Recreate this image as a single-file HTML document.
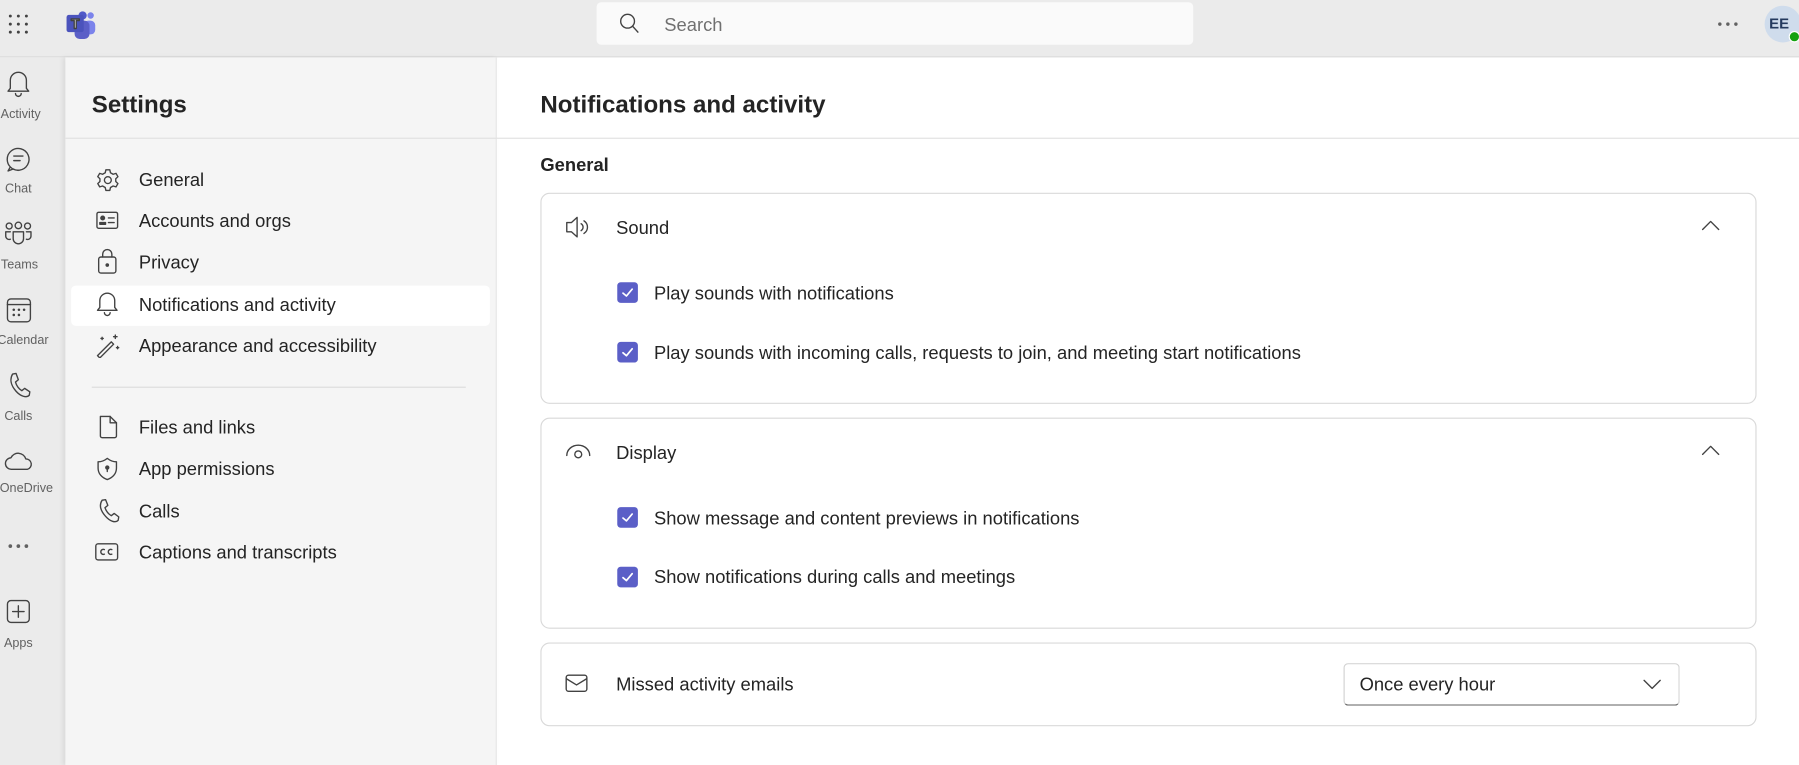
<!DOCTYPE html>
<html><head><meta charset="utf-8">
<style>
*{box-sizing:border-box;margin:0;padding:0}
html,body{width:1799px;height:765px;overflow:hidden;background:#fff}
#w{position:absolute;left:0;top:0;width:1568px;height:667px;transform:scale(1.14732);transform-origin:0 0;font-family:"Segoe UI","Liberation Sans",sans-serif;color:#242424}
.a{position:absolute}
svg{position:absolute;fill:none;stroke:#424242;stroke-width:1.2;stroke-linecap:round;stroke-linejoin:round}
.t{position:absolute;font-size:16px;white-space:nowrap;line-height:20px;margin-top:2px}
.rl{position:absolute;font-size:11px;color:#616161;width:56px;text-align:center;line-height:14px;margin-top:1px}
.cb{position:absolute;width:18px;height:18px;background:#5b5fc7;border-radius:3px}
.cb svg{stroke:#fff;stroke-width:1.5;left:0;top:0}
.card{position:absolute;left:471px;width:1060px;border:1px solid #d9d9d9;border-radius:8px;background:#fff}
</style></head><body><div id="w">
<div class="a" style="left:0;top:0;width:1568px;height:50px;background:#ebebeb;border-bottom:1px solid #dcdcdc"></div>
<svg style="left:6px;top:11px" width="20" height="20"><g fill="#424242" stroke="none"><circle cx="3" cy="3" r="1.3"/><circle cx="10" cy="3" r="1.3"/><circle cx="17" cy="3" r="1.3"/><circle cx="3" cy="10" r="1.3"/><circle cx="10" cy="10" r="1.3"/><circle cx="17" cy="10" r="1.3"/><circle cx="3" cy="17" r="1.3"/><circle cx="10" cy="17" r="1.3"/><circle cx="17" cy="17" r="1.3"/></g></svg>
<svg style="left:57px;top:9px" width="28" height="26"><g stroke="none"><circle cx="22" cy="4.5" r="2.8" fill="#7b83eb"/><rect x="16" y="9" width="10" height="12" rx="4" fill="#7b83eb"/><circle cx="15" cy="4.5" r="3.6" fill="#5059c9"/><rect x="8" y="9" width="13" height="16" rx="4.5" fill="#5b5fc7"/><rect x="1" y="4" width="15" height="15" rx="2" fill="#4b53bc"/></g><text x="8.5" y="16" font-size="12" font-weight="bold" fill="#fff" text-anchor="middle" font-family="Liberation Sans">T</text></svg>
<div class="a" style="left:520px;top:2px;width:520px;height:37px;background:#fafafa;border-radius:4px"></div>
<svg style="left:539px;top:11px" width="20" height="20"><circle cx="8" cy="7.5" r="6"/><path d="M12.5 12 L17 17"/></svg>
<div class="t" style="left:579px;top:11px;color:#707070">Search</div>
<svg style="left:1496px;top:18px" width="20" height="6"><g fill="#616161" stroke="none"><circle cx="3" cy="3" r="1.5"/><circle cx="10" cy="3" r="1.5"/><circle cx="17" cy="3" r="1.5"/></g></svg>
<div class="a" style="left:1538px;top:5px;width:32px;height:32px;border-radius:50%;background:#cfdcec;color:#243a5e;font-size:13px;font-weight:600;line-height:32px;padding-left:4px">EE</div>
<div class="a" style="left:1559px;top:27px;width:10px;height:10px;border-radius:50%;background:#13a10e;border:1px solid #fff"></div>
<!-- rail -->
<div class="a" style="left:0;top:50px;width:57px;height:617px;background:#ebebeb"></div>
<svg style="left:5px;top:60px" width="24" height="26"><path d="M4 17 V10 a7 7 0 0 1 14 0 V17 L20 19.5 H2 Z"/><path d="M8.5 21.5 a2.5 2.5 0 0 0 5 0"/></svg>
<div class="rl" style="left:-10px;top:92px">Activity</div>
<svg style="left:4px;top:126px" width="26" height="26"><path d="M5 19.5 A9.5 9.5 0 1 0 2.3 13 L2.3 13 A9.5 9.5 0 0 0 5 19.5 L3 23 L7.5 21.3 A9.5 9.5 0 0 0 12 22.5"/><path d="M8 10 H16 M8 14 H13.5"/></svg>
<div class="rl" style="left:-12px;top:157px">Chat</div>
<svg style="left:3px;top:192px" width="28" height="26"><circle cx="5" cy="5" r="2.6"/><circle cx="13" cy="4.5" r="2.8"/><circle cx="21" cy="5" r="2.6"/><path d="M8.5 10 H17.5 V16 a4.5 4.5 0 0 1 -9 0 Z"/><path d="M6 10 H2 V14 a3 3 0 0 0 4 2.5 M20 10 H24 V14 a3 3 0 0 1 -4 2.5"/></svg>
<div class="rl" style="left:-11px;top:223px">Teams</div>
<svg style="left:5px;top:259px" width="24" height="24"><rect x="1.5" y="1.5" width="20" height="20" rx="3"/><path d="M1.5 6.5 H21.5"/><g fill="#424242" stroke="none"><circle cx="7" cy="11" r="1.1"/><circle cx="11.5" cy="11" r="1.1"/><circle cx="16" cy="11" r="1.1"/><circle cx="7" cy="15.5" r="1.1"/><circle cx="11.5" cy="15.5" r="1.1"/></g></svg>
<div class="rl" style="left:-8px;top:289px">Calendar</div>
<svg style="left:5px;top:324px" width="24" height="26"><path d="M6 2 L9 1.5 L11 7 L8.5 9 C9.5 12.5 11.5 15 14 16.5 L16.5 14.5 L21 17.5 L20.5 20.5 C18 23 13 21.5 9 17 C5 12.5 3 7 6 2 Z"/></svg>
<div class="rl" style="left:-12px;top:355px">Calls</div>
<svg style="left:3px;top:392px" width="28" height="20"><path d="M7 17 a5 5 0 0 1 -0.5 -10 a7 7 0 0 1 13 1 a4.6 4.6 0 0 1 1.5 9 Z"/></svg>
<div class="rl" style="left:-5px;top:418px">OneDrive</div>
<svg style="left:6px;top:473px" width="22" height="6"><g fill="#616161" stroke="none"><circle cx="3" cy="3" r="1.6"/><circle cx="10" cy="3" r="1.6"/><circle cx="17" cy="3" r="1.6"/></g></svg>
<svg style="left:5px;top:522px" width="24" height="24"><rect x="1.5" y="1.5" width="19" height="19" rx="3"/><path d="M11 6 V16 M6 11 H16"/></svg>
<div class="rl" style="left:-12px;top:553px">Apps</div>
<!-- settings panel -->
<div class="a" style="left:57px;top:50px;width:376px;height:617px;background:#f5f5f5;box-shadow:-2px 0 4px rgba(0,0,0,.08);border-right:1px solid #e6e6e6"></div>
<div class="t" style="left:80px;top:77px;font-size:21px;font-weight:bold;line-height:26px">Settings</div>
<div class="a" style="left:57px;top:120px;width:376px;height:1px;background:#e0e0e0"></div>
<div class="a" style="left:62px;top:249px;width:365px;height:35px;background:#fff;border-radius:4px"></div>
<svg style="left:83px;top:146px" width="22" height="22"><circle cx="11" cy="11" r="3"/><path d="M9.3 2 H12.7 L13.3 4.6 L15.6 5.9 L18.1 5.1 L19.8 8 L17.9 9.8 V12.2 L19.8 14 L18.1 16.9 L15.6 16.1 L13.3 17.4 L12.7 20 H9.3 L8.7 17.4 L6.4 16.1 L3.9 16.9 L2.2 14 L4.1 12.2 V9.8 L2.2 8 L3.9 5.1 L6.4 5.9 L8.7 4.6 Z"/></svg>
<div class="t" style="left:121px;top:146px">General</div>
<svg style="left:83px;top:183px" width="22" height="20"><rect x="1.5" y="2" width="18" height="14" rx="1.5"/><circle cx="6.5" cy="7" r="1.6" fill="#424242"/><path d="M4 12.5 h5 v-1.5 h-5z" fill="#424242"/><path d="M11.5 7 H16.5 M11.5 11 H16.5"/></svg>
<div class="t" style="left:121px;top:182px">Accounts and orgs</div>
<svg style="left:84px;top:216px" width="20" height="24"><rect x="2" y="8" width="15" height="14" rx="2"/><path d="M5.5 8 V5.5 a4 4 0 0 1 8 0 V8"/><circle cx="9.5" cy="15" r="1" fill="#424242"/></svg>
<div class="t" style="left:121px;top:218px">Privacy</div>
<svg style="left:83px;top:253px" width="22" height="24"><path d="M4 15 V9 a6.5 6.5 0 0 1 13 0 V15 L19 17.5 H2 Z"/><path d="M8 19.5 a2.5 2.5 0 0 0 5 0"/></svg>
<div class="t" style="left:121px;top:255px">Notifications and activity</div>
<svg style="left:83px;top:290px" width="22" height="22"><path d="M2 20 L14 8 L16 10 L4 22 Z"/><path d="M17.5 2 V5 M16 3.5 H19 M6 4 V6 M5 5 H7 M19.5 12 V14 M18.5 13 H20.5"/></svg>
<div class="t" style="left:121px;top:291px">Appearance and accessibility</div>
<div class="a" style="left:80px;top:337px;width:326px;height:1px;background:#dcdcdc"></div>
<svg style="left:85px;top:361px" width="20" height="22"><path d="M2.5 2 H11 L16.5 7.5 V19 a1.5 1.5 0 0 1 -1.5 1.5 H4 a1.5 1.5 0 0 1 -1.5 -1.5 Z"/><path d="M11 2 V7.5 H16.5"/></svg>
<div class="t" style="left:121px;top:362px">Files and links</div>
<svg style="left:84px;top:398px" width="22" height="22"><path d="M9.5 1.5 C12 3.5 14.5 4.5 17.5 4.5 V10 C17.5 15 14 18.5 9.5 20 C5 18.5 1.5 15 1.5 10 V4.5 C4.5 4.5 7 3.5 9.5 1.5 Z"/><circle cx="9.5" cy="9.5" r="1.3" fill="#424242"/><path d="M9.5 10.5 V13"/></svg>
<div class="t" style="left:121px;top:398px">App permissions</div>
<svg style="left:84px;top:434px" width="22" height="24"><path d="M5 2 L8 1.5 L10 6.5 L7.5 8.5 C8.5 11.5 10.5 14 13 15.5 L15.5 13.5 L19.5 16.5 L19 19.5 C16.5 22 12 20.5 8 16 C4 11.5 2 6.5 5 2 Z"/></svg>
<div class="t" style="left:121px;top:435px">Calls</div>
<svg style="left:82px;top:472px" width="24" height="20"><rect x="1.5" y="2" width="19" height="14" rx="2"/><path d="M9 7 a2.2 2.2 0 1 0 0 4 M15.5 7 a2.2 2.2 0 1 0 0 4"/></svg>
<div class="t" style="left:121px;top:471px">Captions and transcripts</div>
<!-- main -->
<div class="t" style="left:471px;top:77px;font-size:21px;font-weight:bold;line-height:26px">Notifications and activity</div>
<div class="a" style="left:433px;top:120px;width:1135px;height:1px;background:#e0e0e0"></div>
<div class="t" style="left:471px;top:133px;font-weight:bold">General</div>
<div class="card" style="top:168px;height:184px"></div>
<svg style="left:492px;top:187px" width="24" height="22"><path d="M2 7 H6 L11 2.5 V19.5 L6 15 H2 Z"/><path d="M14.5 8 a3.5 3.5 0 0 1 0 6 M17 5.5 a6.5 6.5 0 0 1 0 11"/></svg>
<div class="t" style="left:537px;top:188px">Sound</div>
<svg style="left:1482px;top:191px" width="18" height="12"><path d="M2 9 L9 2 L16 9"/></svg>
<div class="cb" style="left:538px;top:246px"><svg width="18" height="18"><path d="M5 9.5 L8 12 L13 6"/></svg></div>
<div class="t" style="left:570px;top:245px">Play sounds with notifications</div>
<div class="cb" style="left:538px;top:298px"><svg width="18" height="18"><path d="M5 9.5 L8 12 L13 6"/></svg></div>
<div class="t" style="left:570px;top:297px">Play sounds with incoming calls, requests to join, and meeting start notifications</div>
<div class="card" style="top:364px;height:184px"></div>
<svg style="left:492px;top:385px" width="24" height="18"><path d="M2 12 a10 9 0 0 1 20 0"/><circle cx="12" cy="11" r="3"/></svg>
<div class="t" style="left:537px;top:384px">Display</div>
<svg style="left:1482px;top:387px" width="18" height="12"><path d="M2 9 L9 2 L16 9"/></svg>
<div class="cb" style="left:538px;top:442px"><svg width="18" height="18"><path d="M5 9.5 L8 12 L13 6"/></svg></div>
<div class="t" style="left:570px;top:441px">Show message and content previews in notifications</div>
<div class="cb" style="left:538px;top:494px"><svg width="18" height="18"><path d="M5 9.5 L8 12 L13 6"/></svg></div>
<div class="t" style="left:570px;top:492px">Show notifications during calls and meetings</div>
<div class="card" style="top:560px;height:73px"></div>
<svg style="left:492px;top:587px" width="22" height="18"><rect x="1.5" y="1.5" width="18" height="14" rx="2"/><path d="M1.5 4.5 L10.5 10 L19.5 4.5"/></svg>
<div class="t" style="left:537px;top:586px">Missed activity emails</div>
<div class="a" style="left:1171px;top:578px;width:293px;height:37px;border:1px solid #d1d1d1;border-bottom:1px solid #616161;border-radius:4px;background:#fff"></div>
<div class="t" style="left:1185px;top:586px">Once every hour</div>
<svg style="left:1431px;top:590px" width="18" height="12"><path d="M2 3 L9 10 L16 3"/></svg>
</div></body></html>
